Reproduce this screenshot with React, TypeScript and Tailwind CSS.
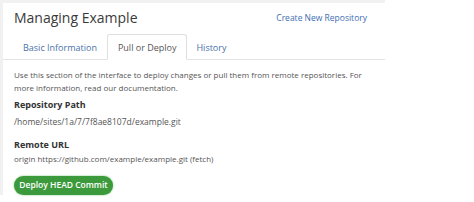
export default function App() {
  return (
    <div className="h-[202px] w-[474px] overflow-hidden bg-white font-['Open_Sans',sans-serif]">
      <div className="w-[385px] border-l-[3px] border-t-[3px] border-[#f1f1f1] bg-white">
        <div className="flex items-center justify-between pl-[11px] pr-[18px] pt-[6px]">
          <h1 className="text-[14px] leading-[18px] text-[#3a3a3a]">Managing Example</h1>
          <a className="text-[8.5px] text-[#3d6db3]">Create New Repository</a>
        </div>

        <div className="mt-[7px] flex items-end border-b border-[#e4e4e4] pl-[10px]">
          <button className="px-[10px] py-[5px] text-[9px] leading-[13px] text-[#4a72a8]">Basic Information</button>
          <button className="-mb-px rounded-t-[3px] border border-b-white border-[#e0e0e0] bg-white px-[10px] pb-[5px] pt-[6px] text-[9px] leading-[13px] text-[#555]">
            Pull or Deploy
          </button>
          <button className="px-[9px] py-[5px] text-[9px] leading-[13px] text-[#4a72a8]">History</button>
        </div>

        <div className="pl-[11px] pr-[10px] pt-[8px]">
          <p className="text-[8px] leading-[13px] text-[#555]">
            Use this section of the interface to deploy changes or pull them from remote repositories. For more
            information, read our documentation.
          </p>

          <h2 className="mt-[5px] text-[9px] font-bold leading-[12px] text-[#333]">Repository Path</h2>
          <p className="mt-[5px] text-[8.5px] leading-[11px] text-[#555]">/home/sites/1a/7/7f8ae8107d/example.git</p>

          <h2 className="mt-[12px] text-[9px] font-bold leading-[12px] text-[#333]">Remote URL</h2>
          <p className="mt-[2px] text-[8px] leading-[11px] text-[#555]">origin https://github.com/example/example.git (fetch)</p>

          <button className="mt-[12px] h-[19px] w-[99px] rounded-full bg-[#3c9a3c] text-[8.5px] font-semibold text-white shadow-[0_0_2px_#6fbf6f]">
            Deploy HEAD Commit
          </button>
        </div>
      </div>
    </div>
  )
}
